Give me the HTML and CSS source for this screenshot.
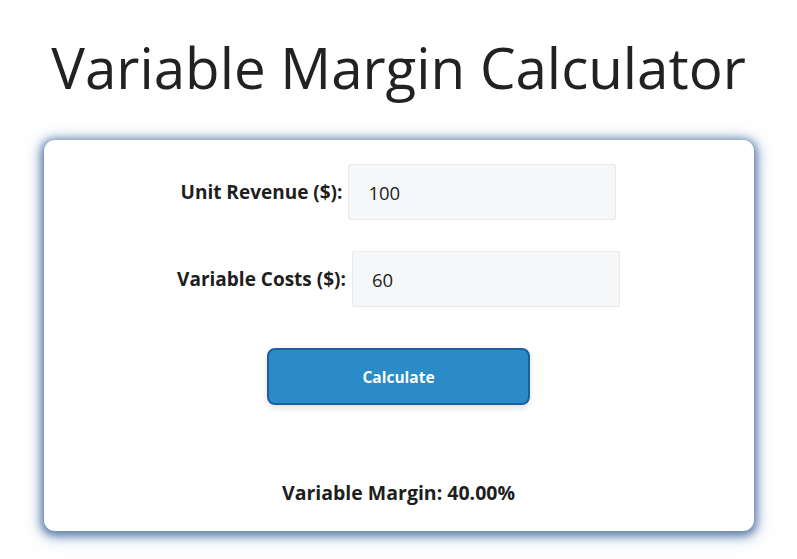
FILE: index.html
```html
<!DOCTYPE html>
<html lang="en">
<head>
<meta charset="utf-8">
<title>Variable Margin Calculator</title>
<link rel="stylesheet" href="styles.css">
</head>
<body>
  <h1 class="title">Variable Margin Calculator</h1>
  <div class="card">
    <div class="row">
      <label class="label" for="rev">Unit Revenue ($):</label>
      <input class="field" id="rev" type="text" value="100">
    </div>
    <div class="row">
      <label class="label" for="cost">Variable Costs ($):</label>
      <input class="field" id="cost" type="text" value="60">
    </div>
    <div class="actions">
      <button class="btn" type="button">Calculate</button>
    </div>
    <div class="result">Variable Margin: 40.00%</div>
  </div>
</body>
</html>
```

FILE: styles.css
```css
html, body {
  margin: 0;
  padding: 0;
  background: #ffffff;
}
body {
  font-family: "Open Sans", "Noto Sans", sans-serif;
  color: #212121;
  padding: 18px 0 28px;
  min-height: 559px;
  box-sizing: border-box;
}
.title {
  margin: 0;
  text-align: center;
  font-weight: 400;
  font-size: 56.5px;
  line-height: 100px;
  color: #222;
}
.card {
  width: 710px;
  height: 391px;
  box-sizing: border-box;
  margin: 22px auto 0;
  background: #fff;
  border-radius: 11px;
  box-shadow: 0 2px 8px 3px rgba(55, 95, 150, 0.75), 0 3px 18px 5px rgba(130, 160, 200, 0.35);
  padding: 24px 0 0;
  display: flex;
  flex-direction: column;
  align-items: center;
}
.row {
  display: flex;
  align-items: center;
  justify-content: center;
  gap: 6px;
  margin-bottom: 31px;
}
.label {
  font-weight: 700;
  font-size: 19px;
  color: #1e1e1e;
}
.field {
  width: 268px;
  height: 56px;
  box-sizing: border-box;
  background: #f6f7f9;
  border: 1px solid #e9eaec;
  border-radius: 2px;
  padding: 0 19px;
  font-family: inherit;
  font-size: 18.5px;
  color: #222;
  outline: none;
}
.actions {
  margin-top: 10px;
}
.btn {
  width: 263px;
  height: 57px;
  background: #2b8bc6;
  border: 2px solid #1b5ea8;
  border-radius: 8px;
  color: #fff;
  font-family: inherit;
  font-weight: 700;
  font-size: 15.5px;
  box-shadow: 0 3px 6px rgba(0, 0, 0, 0.12);
}
.result {
  margin-top: 74px;
  font-weight: 700;
  font-size: 19.5px;
  color: #1e1e1e;
}
```
